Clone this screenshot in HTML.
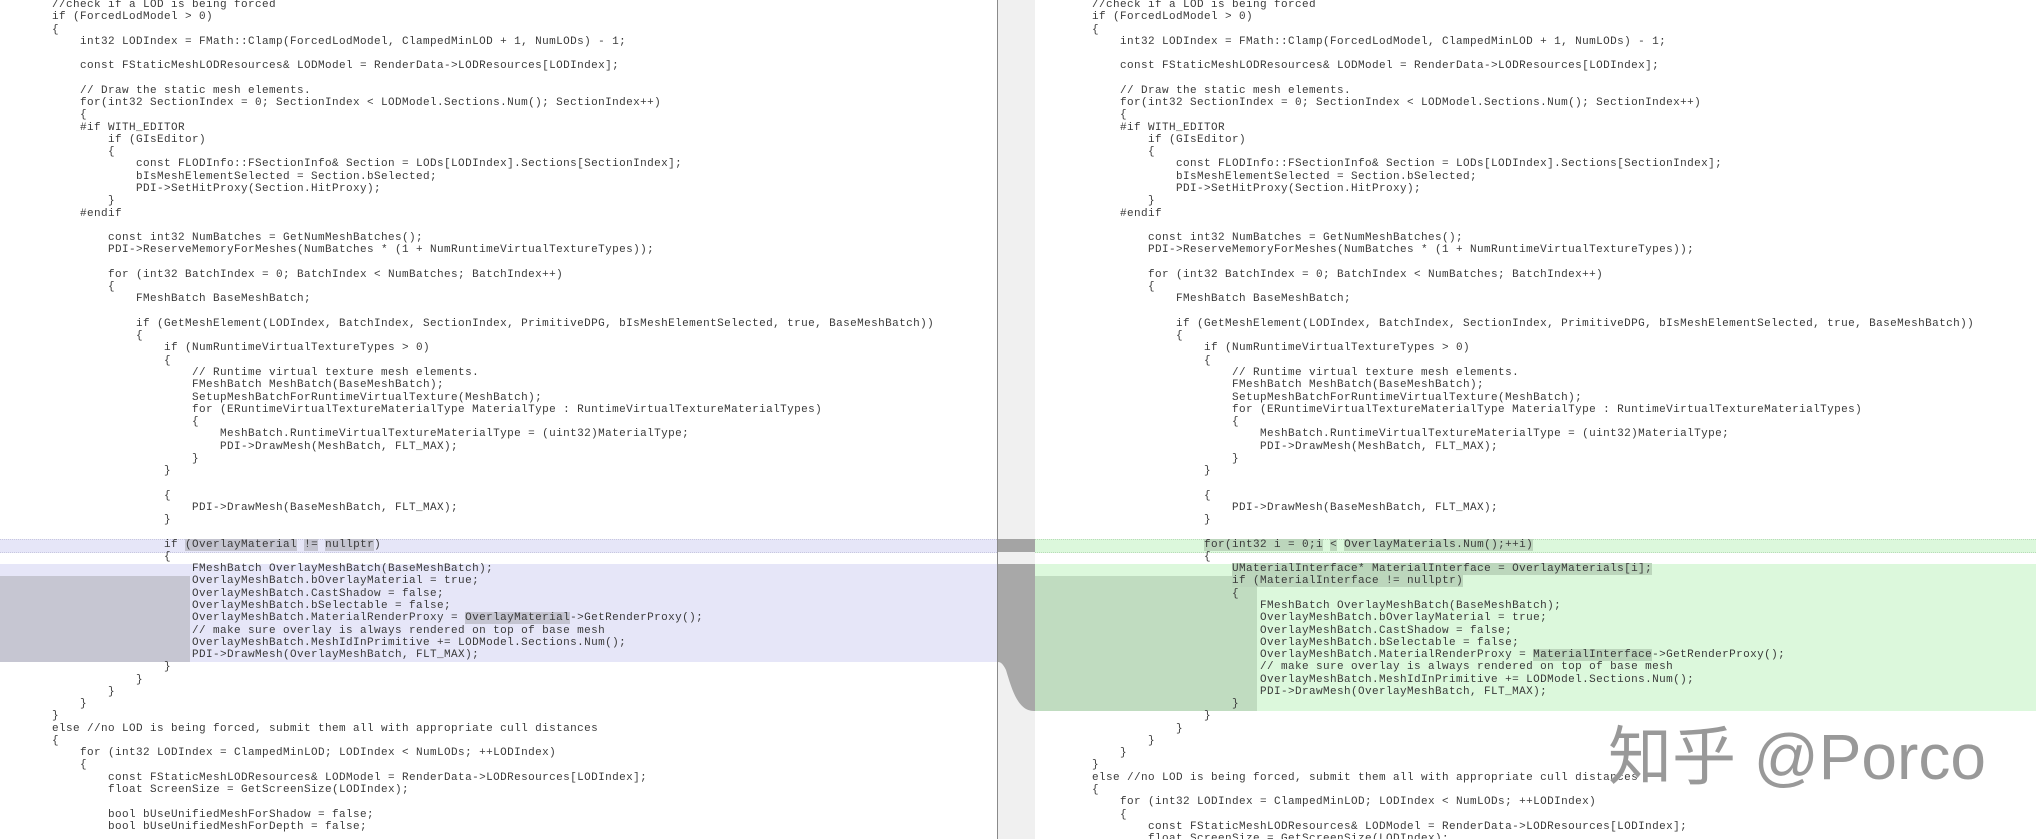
<!DOCTYPE html>
<html><head><meta charset="utf-8">
<style>
html,body{margin:0;padding:0;width:2036px;height:839px;overflow:hidden;background:#fff;position:relative}
.abs{position:absolute}
pre{position:absolute;margin:0;font-family:"Liberation Mono",monospace;font-size:11px;letter-spacing:0.4px;line-height:12.27px;color:#3a3a3a;white-space:pre}
.h{background:#c4c4d0}
.g{background:#bcd6bc}
</style></head><body>
<!-- left highlights -->
<div class="abs" style="left:0;top:539px;width:997px;height:12px;background:#e6e6f8;border-top:1px dotted #c8c8e0;border-bottom:1px dotted #c8c8e0"></div>
<div class="abs" style="left:0;top:564px;width:997px;height:98px;background:#e6e6f8"></div>
<div class="abs" style="left:0;top:576px;width:190px;height:86px;background:#c6c6d2"></div>
<!-- right highlights -->
<div class="abs" style="left:1035px;top:539px;width:1001px;height:12px;background:#dcf8dc;border-top:1px dotted #b8dcb8;border-bottom:1px dotted #b8dcb8"></div>
<div class="abs" style="left:1035px;top:564px;width:1001px;height:147px;background:#dcf8dc"></div>
<div class="abs" style="left:1035px;top:576px;width:222px;height:135px;background:#c0dcc0"></div>
<!-- divider & gutter -->
<div class="abs" style="left:997px;top:0;width:1px;height:839px;background:#8a8a8a"></div>
<div class="abs" style="left:998px;top:0;width:37px;height:839px;background:#f0f0f0"></div>
<div class="abs" style="left:998px;top:539px;width:37px;height:13px;background:#a4a4a4"></div>
<svg class="abs" style="left:998px;top:0" width="37" height="839"><path d="M0 564 L37 564 L37 711 L36 711 C20 711 14 690 8 670 C5 664 3 662 0 662 Z" fill="#a8a8a8"/></svg>

<pre style="left:52px;top:-1px">//check if a LOD is being forced
if (ForcedLodModel &gt; 0)
{
    int32 LODIndex = FMath::Clamp(ForcedLodModel, ClampedMinLOD + 1, NumLODs) - 1;

    const FStaticMeshLODResources&amp; LODModel = RenderData-&gt;LODResources[LODIndex];

    // Draw the static mesh elements.
    for(int32 SectionIndex = 0; SectionIndex &lt; LODModel.Sections.Num(); SectionIndex++)
    {
    #if WITH_EDITOR
        if (GIsEditor)
        {
            const FLODInfo::FSectionInfo&amp; Section = LODs[LODIndex].Sections[SectionIndex];
            bIsMeshElementSelected = Section.bSelected;
            PDI-&gt;SetHitProxy(Section.HitProxy);
        }
    #endif

        const int32 NumBatches = GetNumMeshBatches();
        PDI-&gt;ReserveMemoryForMeshes(NumBatches * (1 + NumRuntimeVirtualTextureTypes));

        for (int32 BatchIndex = 0; BatchIndex &lt; NumBatches; BatchIndex++)
        {
            FMeshBatch BaseMeshBatch;

            if (GetMeshElement(LODIndex, BatchIndex, SectionIndex, PrimitiveDPG, bIsMeshElementSelected, true, BaseMeshBatch))
            {
                if (NumRuntimeVirtualTextureTypes &gt; 0)
                {
                    // Runtime virtual texture mesh elements.
                    FMeshBatch MeshBatch(BaseMeshBatch);
                    SetupMeshBatchForRuntimeVirtualTexture(MeshBatch);
                    for (ERuntimeVirtualTextureMaterialType MaterialType : RuntimeVirtualTextureMaterialTypes)
                    {
                        MeshBatch.RuntimeVirtualTextureMaterialType = (uint32)MaterialType;
                        PDI-&gt;DrawMesh(MeshBatch, FLT_MAX);
                    }
                }

                {
                    PDI-&gt;DrawMesh(BaseMeshBatch, FLT_MAX);
                }

                if <span class="h">(OverlayMaterial</span> <span class="h">!=</span> <span class="h">nullptr</span>)
                {
                    FMeshBatch OverlayMeshBatch(BaseMeshBatch);
                    OverlayMeshBatch.bOverlayMaterial = true;
                    OverlayMeshBatch.CastShadow = false;
                    OverlayMeshBatch.bSelectable = false;
                    OverlayMeshBatch.MaterialRenderProxy = <span class="h">OverlayMaterial</span>-&gt;GetRenderProxy();
                    // make sure overlay is always rendered on top of base mesh
                    OverlayMeshBatch.MeshIdInPrimitive += LODModel.Sections.Num();
                    PDI-&gt;DrawMesh(OverlayMeshBatch, FLT_MAX);
                }
            }
        }
    }
}
else //no LOD is being forced, submit them all with appropriate cull distances
{
    for (int32 LODIndex = ClampedMinLOD; LODIndex &lt; NumLODs; ++LODIndex)
    {
        const FStaticMeshLODResources&amp; LODModel = RenderData-&gt;LODResources[LODIndex];
        float ScreenSize = GetScreenSize(LODIndex);

        bool bUseUnifiedMeshForShadow = false;
        bool bUseUnifiedMeshForDepth = false;</pre>

<pre style="left:1092px;top:-1px">//check if a LOD is being forced
if (ForcedLodModel &gt; 0)
{
    int32 LODIndex = FMath::Clamp(ForcedLodModel, ClampedMinLOD + 1, NumLODs) - 1;

    const FStaticMeshLODResources&amp; LODModel = RenderData-&gt;LODResources[LODIndex];

    // Draw the static mesh elements.
    for(int32 SectionIndex = 0; SectionIndex &lt; LODModel.Sections.Num(); SectionIndex++)
    {
    #if WITH_EDITOR
        if (GIsEditor)
        {
            const FLODInfo::FSectionInfo&amp; Section = LODs[LODIndex].Sections[SectionIndex];
            bIsMeshElementSelected = Section.bSelected;
            PDI-&gt;SetHitProxy(Section.HitProxy);
        }
    #endif

        const int32 NumBatches = GetNumMeshBatches();
        PDI-&gt;ReserveMemoryForMeshes(NumBatches * (1 + NumRuntimeVirtualTextureTypes));

        for (int32 BatchIndex = 0; BatchIndex &lt; NumBatches; BatchIndex++)
        {
            FMeshBatch BaseMeshBatch;

            if (GetMeshElement(LODIndex, BatchIndex, SectionIndex, PrimitiveDPG, bIsMeshElementSelected, true, BaseMeshBatch))
            {
                if (NumRuntimeVirtualTextureTypes &gt; 0)
                {
                    // Runtime virtual texture mesh elements.
                    FMeshBatch MeshBatch(BaseMeshBatch);
                    SetupMeshBatchForRuntimeVirtualTexture(MeshBatch);
                    for (ERuntimeVirtualTextureMaterialType MaterialType : RuntimeVirtualTextureMaterialTypes)
                    {
                        MeshBatch.RuntimeVirtualTextureMaterialType = (uint32)MaterialType;
                        PDI-&gt;DrawMesh(MeshBatch, FLT_MAX);
                    }
                }

                {
                    PDI-&gt;DrawMesh(BaseMeshBatch, FLT_MAX);
                }

                <span class="g">for(int32 i = 0;i</span> <span class="g">&lt;</span> <span class="g">OverlayMaterials.Num();++i)</span>
                {
                    <span class="g">UMaterialInterface* MaterialInterface = OverlayMaterials[i];</span>
                    <span class="g">if (MaterialInterface != nullptr)</span>
                    {
                        FMeshBatch OverlayMeshBatch(BaseMeshBatch);
                        OverlayMeshBatch.bOverlayMaterial = true;
                        OverlayMeshBatch.CastShadow = false;
                        OverlayMeshBatch.bSelectable = false;
                        OverlayMeshBatch.MaterialRenderProxy = <span class="g">MaterialInterface</span>-&gt;GetRenderProxy();
                        // make sure overlay is always rendered on top of base mesh
                        OverlayMeshBatch.MeshIdInPrimitive += LODModel.Sections.Num();
                        PDI-&gt;DrawMesh(OverlayMeshBatch, FLT_MAX);
                    }
                }
            }
        }
    }
}
else //no LOD is being forced, submit them all with appropriate cull distances
{
    for (int32 LODIndex = ClampedMinLOD; LODIndex &lt; NumLODs; ++LODIndex)
    {
        const FStaticMeshLODResources&amp; LODModel = RenderData-&gt;LODResources[LODIndex];
        float ScreenSize = GetScreenSize(LODIndex);</pre>

<div class="abs" style="left:1608px;top:722px;font-family:'Liberation Sans','Noto Sans CJK SC',sans-serif;font-size:64px;line-height:70px;color:#999;white-space:nowrap;text-shadow:0 0 1px #fff">知乎 @Porco</div>
</body></html>
